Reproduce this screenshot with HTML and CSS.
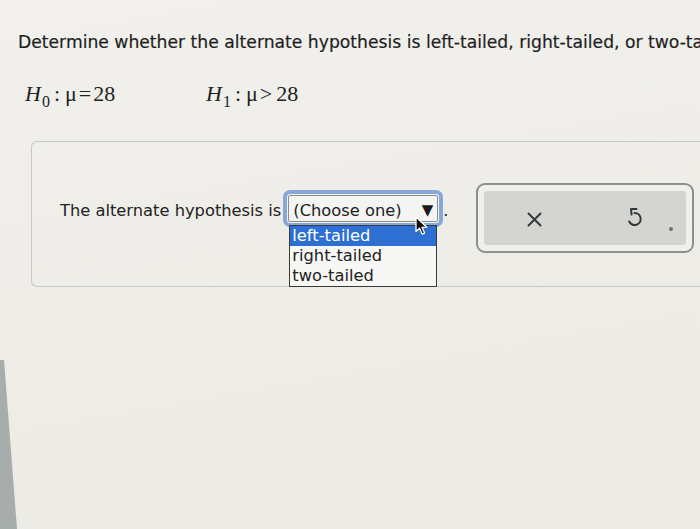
FILE: index.html
```html
<!DOCTYPE html>
<html>
<head>
<meta charset="utf-8">
<link rel="stylesheet" href="styles.css">
</head>
<body>
<div class="page">
  <h1 class="question">Determine whether the alternate hypothesis is left-tailed, right-tailed, or two-tailed.</h1>
  <div class="hyps">
    <div class="hyp h0"><i>H</i><sub>0</sub><span class="colon">:</span>μ<span class="op">=</span>28</div>
    <div class="hyp h1"><i>H</i><sub>1</sub><span class="colon">:</span>μ<span class="op gt">&gt;</span>28</div>
  </div>
  <div class="panel">
    <div class="sentence">
      <span class="label">The alternate hypothesis is</span>
      <div class="select-wrap">
        <div class="select">
          <span>(Choose one)</span>
          <span class="caret">▼</span>
        </div>
        <ul class="dropdown">
          <li class="active">left-tailed</li>
          <li>right-tailed</li>
          <li>two-tailed</li>
        </ul>
        <svg class="cursor" width="14" height="20" viewBox="0 0 14 20"><path d="M1 1 L1 15.5 L4.6 12.3 L7.2 18.2 L9.6 17.1 L7.1 11.4 L11.8 11.2 Z" fill="#111" stroke="#fff" stroke-width="1.3" stroke-linejoin="round"/></svg>
      </div>
      <span class="period">.</span>
    </div>
    <div class="btn-group">
      <div class="btn-fill">
        <svg class="icon-x" width="15" height="15" viewBox="0 0 15 15"><path d="M1.5 1.5 L13.5 13.5 M13.5 1.5 L1.5 13.5" stroke="#30383b" stroke-width="1.9" fill="none" stroke-linecap="round"/></svg>
        <svg class="icon-undo" width="17" height="21" viewBox="0 0 17 21"><path d="M8.5 7 A6 6 0 1 1 3.2 15.5" stroke="#30383b" stroke-width="2" fill="none" stroke-linecap="round"/><path d="M10.5 3 L5 3 L5.6 8.6" stroke="#30383b" stroke-width="2" fill="none" stroke-linecap="round" stroke-linejoin="round"/></svg>
        <span class="dot"></span>
      </div>
    </div>
  </div>
</div>
<div class="bezel"></div>
</body>
</html>
```
FILE: styles.css
```css
html, body {
  margin: 0;
  padding: 0;
}
body {
  width: 700px;
  height: 529px;
  overflow: hidden;
  position: relative;
  background: linear-gradient(170deg, #f1f0ec 0%, #eeede8 45%, #ebeae5 100%);
  font-family: "DejaVu Sans", Verdana, sans-serif;
  color: #2a2a2a;
}
.page {
  padding: 32px 0 0 18px;
}
.question {
  margin: 0;
  font-size: 17.2px;
  line-height: 20px;
  font-weight: normal;
  white-space: nowrap;
  color: #1f1f1f;
  -webkit-text-stroke: 0.2px #1f1f1f;
}
.hyps {
  display: flex;
  margin: 30px 0 0 7px;
  font-family: "Liberation Serif", "Times New Roman", serif;
  font-size: 22px;
  line-height: 24px;
  color: #222;
}
.hyp {
  white-space: nowrap;
}
.h0 {
  width: 181px;
}
.hyp sub {
  font-size: 16px;
  vertical-align: -6px;
  line-height: 0;
  margin-left: 1px;
}
.colon {
  margin: 0 5px 0 4px;
}
.op {
  margin: 0 2px;
}
.op.gt {
  margin: 0 4px 0 2px;
}
.panel {
  margin: 35px 0 0 13px;
  height: 146px;
  box-sizing: border-box;
  border: 1px solid #c9c9c5;
  border-right: none;
  border-radius: 6px 0 0 6px;
  display: flex;
  align-items: flex-start;
  padding: 43px 0 0 28px;
}
.sentence {
  display: flex;
  align-items: baseline;
  margin-top: 5px;
  font-size: 16.3px;
  color: #222;
}
.label {
  margin-right: 2px;
}
.select-wrap {
  position: relative;
  border: 4px solid #86a8d8;
  border-radius: 7px;
  padding: 1px;
  background: #f4f4f2;
}
.select {
  height: 27px;
  border: 1px solid #8a8a8a;
  border-radius: 2px;
  background: #f4f4f2;
  display: flex;
  align-items: center;
  justify-content: space-between;
  padding: 3px 4px 0;
  box-sizing: border-box;
  width: 150px;
}
.caret {
  font-size: 15px;
  color: #1a1a1a;
}
.dropdown {
  position: absolute;
  top: calc(100% + 2px);
  left: 2px;
  width: 146px;
  margin: 0;
  padding: 0;
  list-style: none;
  border: 1px solid #3a3a3a;
  background: #f7f7f5;
  z-index: 2;
}
.dropdown li {
  height: 20px;
  line-height: 20px;
  padding-left: 2px;
  color: #222;
}
.dropdown li.active {
  background: #2d6fd2;
  color: #fff;
}
.cursor {
  position: absolute;
  left: 128px;
  top: 22px;
  z-index: 3;
}
.btn-group {
  margin-left: 28px;
  margin-top: -2px;
  width: 218px;
  height: 70px;
  box-sizing: border-box;
  border: 2px solid #8e8e8c;
  border-radius: 9px;
  padding: 6px;
  background: #efefec;
}
.btn-fill {
  height: 100%;
  border-radius: 3px;
  background: #d4d4d0;
  display: flex;
  align-items: center;
  padding-left: 43px;
}
.icon-x {
  margin-top: 2px;
}
.icon-undo {
  margin-left: 84px;
  margin-top: -3px;
}
.dot {
  width: 4px;
  height: 4px;
  border-radius: 50%;
  background: #6e6e6e;
  margin-left: 26px;
  margin-top: 22px;
}
.bezel {
  position: absolute;
  left: 0;
  top: 360px;
  width: 18px;
  height: 169px;
  background: #a6adab;
  clip-path: polygon(0 0, 4px 0, 17px 100%, 0 100%);
}
```
